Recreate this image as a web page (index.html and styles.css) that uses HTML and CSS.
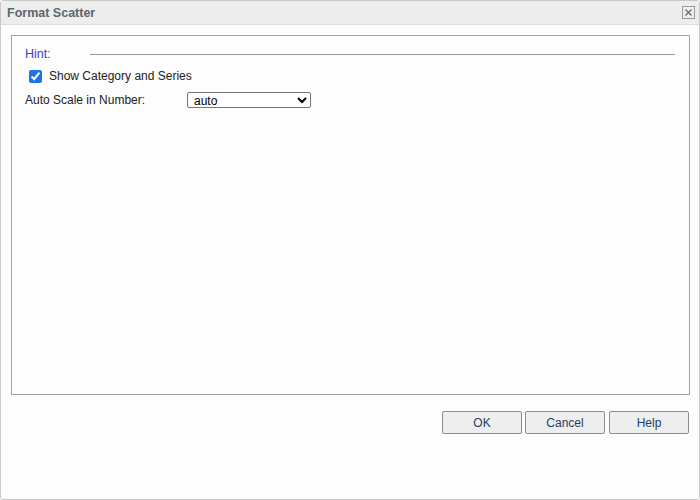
FILE: index.html
```html
<!DOCTYPE html>
<html lang="en">

<head>
    <meta charset="UTF-8">
    <title>Format Scatter</title>
    <link rel="stylesheet" href="styles.css">
</head>

<body>
    <div class="dialog">
        <!-- Title bar -->
        <div class="title-bar">
            <span class="title">Format Scatter</span>
            <span class="close-btn">
                <svg width="13" height="13" viewBox="0 0 13 13">
                    <rect x="0.5" y="0.5" width="12" height="12" fill="none" stroke="#9a9a9a"/>
                    <path d="M3.5 3.5 L9.5 9.5 M9.5 3.5 L3.5 9.5" stroke="#6e6e6e" stroke-width="1.4"/>
                </svg>
            </span>
        </div>

        <!-- Dialog body -->
        <div class="dialog-body">
            <div class="panel">
                <div class="group-head">
                    <span class="group-label">Hint:</span>
                    <span class="group-line"></span>
                </div>
                <label class="check-row">
                    <input type="checkbox" checked>
                    <span>Show Category and Series</span>
                </label>
                <div class="field-row">
                    <span class="field-label">Auto Scale in Number:</span>
                    <select class="select-field">
                        <option>auto</option>
                    </select>
                </div>
            </div>

            <div class="button-row">
                <button class="btn btn-ok">OK</button>
                <button class="btn">Cancel</button>
                <button class="btn">Help</button>
            </div>
        </div>
    </div>
</body>

</html>
```

FILE: styles.css
```css
/* Base */
body {
    margin: 0;
    font-family: "Liberation Sans", Arial, sans-serif;
    font-size: 12px;
    color: #222;
    background: #fff;
}

.dialog {
    width: 698px;
    height: 498px;
    border: 1px solid #c8c8c8;
    border-radius: 3px;
    background: #fcfdfc;
    display: flex;
    flex-direction: column;
}

/* Title bar */
.title-bar {
    height: 23px;
    background: #ededeb;
    border-bottom: 1px solid #dcdcdc;
    display: flex;
    align-items: center;
    justify-content: space-between;
    padding: 0 4px 0 6px;
}

.title {
    font-weight: bold;
    font-size: 12.5px;
    color: #5b6673;
}

.close-btn {
    display: flex;
}

/* Body */
.dialog-body {
    flex: 1;
    padding: 10px 10px 0 10px;
}

.panel {
    height: 348px;
    border: 1px solid #a3a3a3;
    margin-right: -1px;
    padding: 10px 13px 0 13px;
}

.group-head {
    display: flex;
    align-items: center;
    height: 16px;
}

.group-label {
    color: #3d3dcc;
    font-size: 12.5px;
    width: 65px;
}

.group-line {
    flex: 1;
    border-top: 1px solid #9a9a9a;
    margin-right: 1px;
}

.check-row {
    display: flex;
    align-items: center;
    height: 16px;
    margin-top: 6px;
    padding-left: 3px;
}

.check-row input {
    width: 13px;
    height: 13px;
    margin: 0 7px 0 1px;
    accent-color: #1a73e8;
}

.field-row {
    display: flex;
    align-items: center;
    margin-top: 8px;
}

.field-label {
    width: 162px;
}

.select-field {
    width: 124px;
    height: 16px;
    font-family: "Liberation Sans", Arial, sans-serif;
    font-size: 12px;
    border: 1px solid #767676;
    border-radius: 2px;
    padding: 0 2px;
    background: #fff;
    color: #000;
}

/* Buttons */
.button-row {
    display: flex;
    justify-content: flex-end;
    gap: 4px;
    margin-top: 16px;
}

.btn {
    width: 80px;
    height: 23px;
    background: #eeeeee;
    border: 1px solid #8c8c8c;
    border-radius: 2px;
    font-family: "Liberation Sans", Arial, sans-serif;
    font-size: 12px;
    color: #1f3e66;
}

.btn-ok {
    margin-right: -1px;
}
```
